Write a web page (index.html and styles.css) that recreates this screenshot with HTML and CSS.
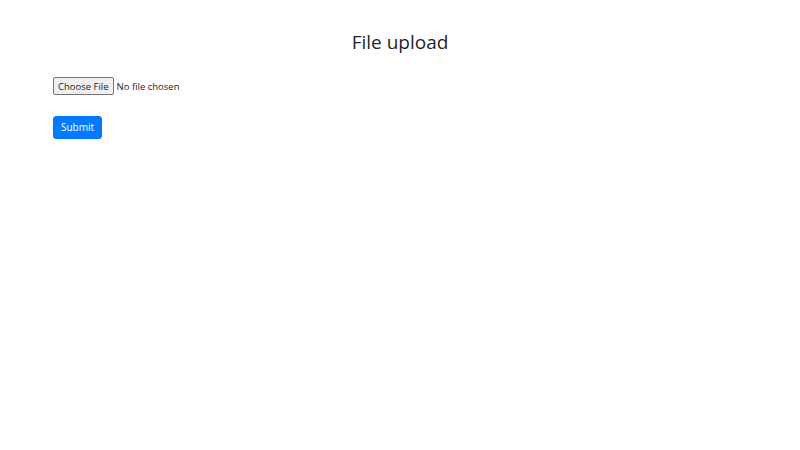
FILE: index.html
```html
<!DOCTYPE html>
<html lang="en">
<head>
    <meta charset="UTF-8">
    <meta name="viewport" content="width=device-width, initial-scale=1.0">
    <title>File upload</title>
    <link rel="stylesheet" href="styles.css">
</head>
<body>
    <div class="container">
        <h1 class="title">File upload</h1>
        <form class="upload-form" action="#" method="post" enctype="multipart/form-data">
            <div class="form-group">
                <input type="file" name="file" class="file-input">
            </div>
            <button type="submit" class="btn-submit">Submit</button>
        </form>
    </div>
</body>
</html>
```

FILE: styles.css
```css
body {
    font-family: 'Open Sans', 'Segoe UI', 'Liberation Sans', sans-serif;
    margin: 0;
    color: #212529;
    background-color: #ffffff;
}

.container {
    max-width: 724px;
    margin: 0 auto;
    padding: 31px 15px 0;
    box-sizing: border-box;
}

.title {
    font-size: 19px;
    font-weight: 400;
    line-height: 1.2;
    text-align: center;
    margin: 0 0 19px;
}

.form-group {
    margin-bottom: 19px;
}

.file-input {
    font-family: 'Open Sans', 'Segoe UI', 'Liberation Sans', sans-serif;
    font-size: 9.5px;
    color: #212529;
}

.file-input::file-selector-button {
    font-family: 'Open Sans', 'Segoe UI', 'Liberation Sans', sans-serif;
    font-size: 9.5px;
    color: #212529;
    height: 18px;
    padding: 0 4px;
    margin-right: 3px;
    background-color: #efefef;
    border: 1px solid #767676;
    border-radius: 2px;
}

.btn-submit {
    font-family: 'Open Sans', 'Segoe UI', 'Liberation Sans', sans-serif;
    font-size: 10px;
    line-height: 1.5;
    padding: 3px 7px;
    color: #ffffff;
    background-color: #007bff;
    border: 1px solid #007bff;
    border-radius: 3px;
    cursor: pointer;
}
```
